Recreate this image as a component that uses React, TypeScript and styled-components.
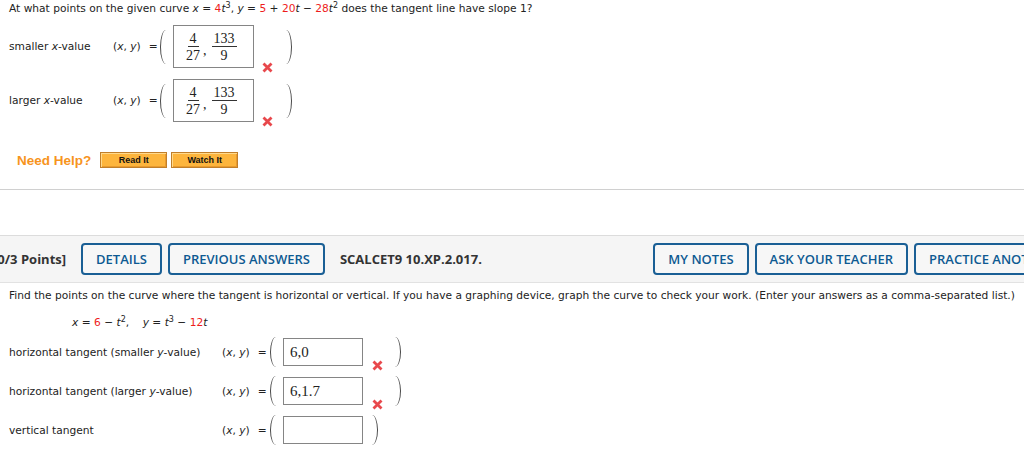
import React from "react";
import styled, { createGlobalStyle } from "styled-components";

const GlobalStyle = createGlobalStyle`
  html, body {
    margin: 0;
    padding: 0;
    background: #fff;
  }
  body {
    overflow: hidden;
  }
`;

const Page = styled.div`
  width: 1024px;
  height: 461px;
  overflow: hidden;
  font-family: "DejaVu Sans", Verdana, sans-serif;
  font-size: 10.65px;
  color: #222;
`;

const Block = styled.section`
  padding: 0 9px;
`;

const Prompt = styled.p`
  margin: 0;
  padding-top: 2px;
  line-height: 14px;
  white-space: nowrap;
`;

const Var = styled.i`
  font-style: italic;
`;

const Num = styled.span`
  color: #ee1c1c;
`;

const Sup = styled.sup`
  font-size: 8px;
  line-height: 0;
  vertical-align: 4px;
`;

const AnswerList = styled.div<{ $top: number; $gap: number }>`
  display: flex;
  flex-direction: column;
  gap: ${p => p.$gap}px;
  padding-top: ${p => p.$top}px;
`;

const AnswerRow = styled.div`
  display: flex;
  align-items: center;
`;

const RowLabel = styled.span<{ $w: number }>`
  width: ${p => p.$w}px;
  flex: none;
  white-space: nowrap;
`;

const Pair = styled.span<{ $w: number }>`
  width: ${p => p.$w}px;
  flex: none;
  white-space: nowrap;
`;

const Eq = styled.span`
  margin-left: 8px;
`;

const Paren = styled.span<{ $h: number; $side: "left" | "right"; $gap?: number }>`
  display: block;
  flex: none;
  box-sizing: border-box;
  width: 12px;
  height: ${p => p.$h}px;
  margin: -2px 0 -2px ${p => p.$gap ?? 0}px;
  border-radius: 50%;
  border-${p => p.$side}: 1.6px solid #4a4a4a;
`;

const AnswerBox = styled.div<{ $w: number; $h: number; $pad: number }>`
  box-sizing: border-box;
  flex: none;
  width: ${p => p.$w}px;
  height: ${p => p.$h}px;
  margin-left: 1px;
  padding-left: ${p => p.$pad}px;
  border: 1px solid #858585;
  background: #fff;
  display: flex;
  align-items: center;
  font-family: "Liberation Serif", "Times New Roman", serif;
  font-size: 15px;
  color: #222;
`;

const Frac = styled.span`
  display: inline-flex;
  flex-direction: column;
  align-items: center;
  font-size: 14px;
  line-height: 13px;
`;

const Numer = styled.span`
  padding: 0 2px 1px;
  border-bottom: 1px solid #333;
`;

const Denom = styled.span`
  padding: 2px 2px 0;
`;

const Comma = styled.span`
  align-self: flex-end;
  margin: 0 5px 11px 1px;
  font-size: 14px;
  line-height: 10px;
`;

const Wrong = styled.svg<{ $gap: number }>`
  flex: none;
  align-self: flex-end;
  margin-left: ${p => p.$gap}px;
  margin-bottom: -5px;
`;

const WrongMark = ({ gap }: { gap: number }) => (
  <Wrong $gap={gap} width="11" height="11" viewBox="0 0 11 11">
    <path d="M1.5 1.5 L9.5 9.5 M9.5 1.5 L1.5 9.5" stroke="#e8484c" strokeWidth="2.8" />
  </Wrong>
);

const HelpRow = styled.div`
  display: flex;
  align-items: center;
  margin-top: 30px;
  padding-left: 8px;
`;

const HelpTitle = styled.span`
  font-family: "Liberation Sans", Arial, sans-serif;
  font-weight: 700;
  font-size: 13.5px;
  color: #f7941d;
  margin-right: 9px;
`;

const HelpButton = styled.button`
  box-sizing: border-box;
  width: 67px;
  height: 16px;
  margin-right: 4px;
  padding: 0;
  border: 1px solid #c17f2a;
  box-shadow: inset 1px 1px 0 #ffd98c, inset -1px -1px 0 #e89a2e;
  background: #fdb53d;
  font-family: "Liberation Sans", Arial, sans-serif;
  font-weight: 700;
  font-size: 9px;
  color: #111;
`;

const Divider = styled.hr`
  margin: 21px 0 0;
  border: 0;
  border-top: 1px solid #d0d0d0;
`;

const QuestionHeader = styled.div`
  margin-top: 45px;
  height: 46px;
  border-top: 1px solid #dcdcdc;
  border-bottom: 1px solid #e2e2e2;
  background: #f5f5f5;
  overflow: hidden;
`;

const HeaderInner = styled.div`
  display: flex;
  align-items: center;
  height: 100%;
  width: 1076px;
  margin-left: -7px;
  font-family: "Open Sans", sans-serif;
  font-size: 13px;
`;

const Points = styled.span`
  font-weight: 700;
  color: #333;
  margin-right: 15px;
  white-space: nowrap;
`;

const Code = styled.span`
  font-weight: 700;
  color: #333;
  margin-left: 15px;
  white-space: nowrap;
`;

const ButtonGroup = styled.div<{ $push?: boolean }>`
  display: flex;
  gap: 6px;
  margin-left: ${p => (p.$push ? "auto" : "0")};
`;

const OutlineButton = styled.button`
  box-sizing: border-box;
  height: 32px;
  padding: 0 13px;
  border: 2px solid #1a5f95;
  border-radius: 4px;
  background: #f7f7f7;
  color: #0e5a92;
  font-family: "Open Sans", sans-serif;
  font-weight: 600;
  font-size: 13px;
  white-space: nowrap;
`;

const Instructions = styled.p`
  margin: 6px 0 0;
  line-height: 14px;
  white-space: nowrap;
`;

const Equation = styled.p`
  margin: 13px 0 0;
  padding-left: 63px;
  line-height: 14px;
  white-space: nowrap;
`;

const XY = () => (
  <>
    (<Var>x</Var>, <Var>y</Var>)<Eq>=</Eq>
  </>
);

type Fraction = [string, string];

const FracPair = ({ a, b }: { a: Fraction; b: Fraction }) => (
  <>
    <Frac>
      <Numer>{a[0]}</Numer>
      <Denom>{a[1]}</Denom>
    </Frac>
    <Comma>,</Comma>
    <Frac>
      <Numer>{b[0]}</Numer>
      <Denom>{b[1]}</Denom>
    </Frac>
  </>
);

const first = [
  { label: "smaller", a: ["4", "27"] as Fraction, b: ["133", "9"] as Fraction },
  { label: "larger", a: ["4", "27"] as Fraction, b: ["133", "9"] as Fraction },
];

const second = [
  { label: <>horizontal tangent (smaller <Var>y</Var>-value)</>, value: "6,0", wrong: true },
  { label: <>horizontal tangent (larger <Var>y</Var>-value)</>, value: "6,1.7", wrong: true },
  { label: <>vertical tangent</>, value: "", wrong: false },
];

export default function App() {
  return (
    <Page>
      <GlobalStyle />
      <Block>
        <Prompt>
          At what points on the given curve <Var>x</Var> = <Num>4</Num>
          <Var>t</Var>
          <Sup>3</Sup>, <Var>y</Var> = <Num>5</Num> + <Num>20</Num>
          <Var>t</Var> − <Num>28</Num>
          <Var>t</Var>
          <Sup>2</Sup> does the tangent line have slope 1?
        </Prompt>
        <AnswerList $top={9} $gap={11}>
          {first.map(row => (
            <AnswerRow key={row.label}>
              <RowLabel $w={104}>
                {row.label} <Var>x</Var>-value
              </RowLabel>
              <Pair $w={47}>
                <XY />
              </Pair>
              <Paren $side="left" $h={34} />
              <AnswerBox $w={81} $h={43} $pad={10}>
                <FracPair a={row.a} b={row.b} />
              </AnswerBox>
              <WrongMark gap={8} />
              <Paren $side="right" $h={34} $gap={7} />
            </AnswerRow>
          ))}
        </AnswerList>
        <HelpRow>
          <HelpTitle>Need Help?</HelpTitle>
          <HelpButton>Read It</HelpButton>
          <HelpButton>Watch It</HelpButton>
        </HelpRow>
      </Block>
      <Divider />
      <QuestionHeader>
        <HeaderInner>
          <Points>[0/3 Points]</Points>
          <ButtonGroup>
            <OutlineButton>DETAILS</OutlineButton>
            <OutlineButton>PREVIOUS ANSWERS</OutlineButton>
          </ButtonGroup>
          <Code>SCALCET9 10.XP.2.017.</Code>
          <ButtonGroup $push>
            <OutlineButton>MY NOTES</OutlineButton>
            <OutlineButton>ASK YOUR TEACHER</OutlineButton>
            <OutlineButton>PRACTICE ANOTHER</OutlineButton>
          </ButtonGroup>
        </HeaderInner>
      </QuestionHeader>
      <Block>
        <Instructions>
          Find the points on the curve where the tangent is horizontal or vertical. If you have a
          graphing device, graph the curve to check your work. (Enter your answers as a
          comma-separated list.)
        </Instructions>
        <Equation>
          <Var>x</Var> = <Num>6</Num> − <Var>t</Var>
          <Sup>2</Sup>,&nbsp;&nbsp;&nbsp; <Var>y</Var> = <Var>t</Var>
          <Sup>3</Sup> − <Num>12</Num>
          <Var>t</Var>
        </Equation>
        <AnswerList $top={8} $gap={11}>
          {second.map((row, i) => (
            <AnswerRow key={i}>
              <RowLabel $w={213}>{row.label}</RowLabel>
              <Pair $w={48}>
                <XY />
              </Pair>
              <Paren $side="left" $h={30} />
              <AnswerBox $w={80} $h={28} $pad={6}>
                {row.value}
              </AnswerBox>
              {row.wrong && <WrongMark gap={9} />}
              <Paren $side="right" $h={30} $gap={row.wrong ? 6 : 3} />
            </AnswerRow>
          ))}
        </AnswerList>
      </Block>
    </Page>
  );
}
